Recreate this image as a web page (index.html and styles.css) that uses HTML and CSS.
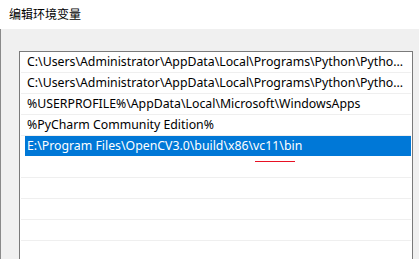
FILE: index.html
```html
<!DOCTYPE html>
<html lang="zh-CN">
<head>
    <meta charset="UTF-8">
    <title>编辑环境变量</title>
    <link rel="stylesheet" href="styles.css">
</head>
<body>
    <div class="titlebar">编辑环境变量</div>
    <div class="dialog">
        <div class="path-list">
            <div class="row"><span class="cell">C:\Users\Administrator\AppData\Local\Programs\Python\Pytho...</span></div>
            <div class="row"><span class="cell">C:\Users\Administrator\AppData\Local\Programs\Python\Pytho...</span></div>
            <div class="row"><span class="cell">%USERPROFILE%\AppData\Local\Microsoft\WindowsApps</span></div>
            <div class="row"><span class="cell">%PyCharm Community Edition%</span></div>
            <div class="row selected"><span class="cell">E:\Program Files\OpenCV3.0\build\x86\vc11\bin</span></div>
            <div class="row"><span class="cell"></span></div>
            <div class="row"><span class="cell"></span></div>
            <div class="row"><span class="cell"></span></div>
            <div class="row"><span class="cell"></span></div>
            <div class="row"><span class="cell"></span></div>
            <div class="mark"></div>
        </div>
    </div>
</body>
</html>
```

FILE: styles.css
```css
/* Dialog */
body {
    margin: 0;
    padding: 0;
    background-color: #f0f0f0;
    font-family: "Noto Sans", "Noto Sans CJK SC", sans-serif;
    font-size: 12.3px;
    color: #000;
    overflow: hidden;
}

.titlebar {
    height: 29px;
    line-height: 28px;
    padding-left: 9px;
    background-color: #ffffff;
    font-family: "Noto Sans CJK SC", sans-serif;
    font-size: 12px;
}

.dialog {
    box-sizing: border-box;
    height: 230px;
    overflow: hidden;
    border-left: 1px solid #8a8a8a;
    padding: 22px 8px 0 18px;
}

/* Path list */
.path-list {
    position: relative;
    width: 390px;
    border: 1px solid #7a7a7a;
    border-bottom: none;
    background-color: #ffffff;
    padding: 0 1px;
}

.row {
    height: 20px;
    border-bottom: 1px solid #efefef;
    padding-left: 4px;
}

.cell {
    display: block;
    height: 20px;
    line-height: 20px;
    padding-left: 2px;
    white-space: nowrap;
    overflow: hidden;
}

.row.selected {
    border-bottom-color: #ffffff;
}

.row.selected .cell {
    background-color: #0078d7;
    color: #ffffff;
}

.mark {
    position: absolute;
    left: 235px;
    top: 109px;
    width: 40px;
    height: 1px;
    background-color: #e81123;
}
```
